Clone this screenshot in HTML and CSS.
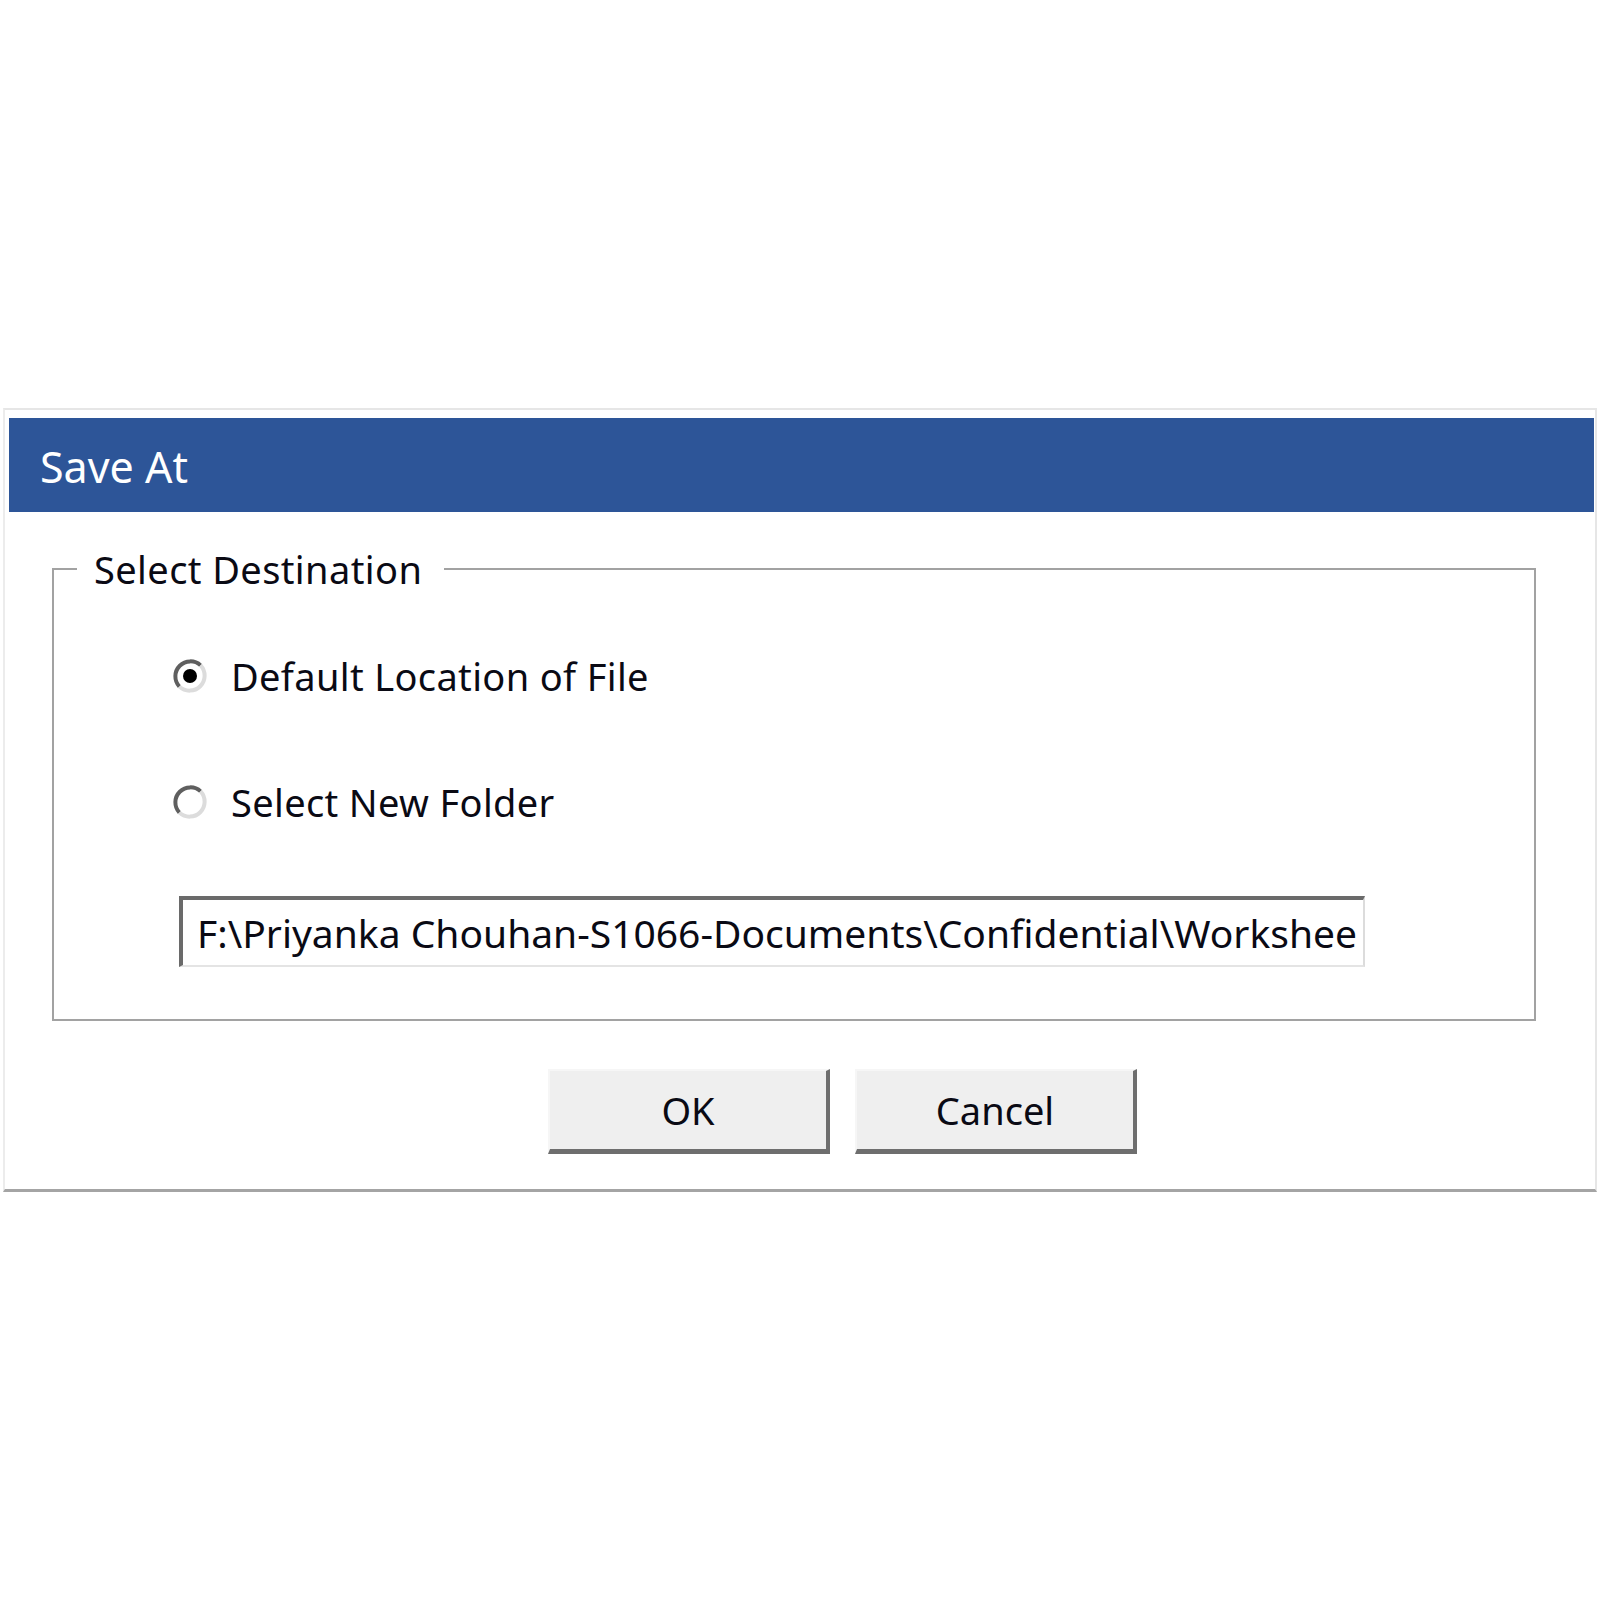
FILE: index.html
```html
<!DOCTYPE html>
<html lang="en">
<head>
<meta charset="utf-8">
<title>Save At</title>
<link rel="stylesheet" href="styles.css">
</head>
<body>
<div class="page">
  <div class="window">
    <div class="titlebar"><span class="title">Save At</span></div>
    <fieldset class="group">
      <legend class="legend">Select Destination</legend>
      <div class="group-body">
        <div class="radio-row row-first">
          <svg class="radio" viewBox="0 0 40 40" width="40" height="40" aria-hidden="true">
            <circle cx="20" cy="20" r="15" fill="#ffffff"/>
            <path d="M9.4 30.6 A15 15 0 0 1 30.6 9.4" fill="none" stroke="#5f5f5f" stroke-width="4"/>
            <path d="M30.6 9.4 A15 15 0 0 1 9.4 30.6" fill="none" stroke="#dcdcdc" stroke-width="4"/>
            <circle cx="20" cy="20" r="7" fill="#000000"/>
          </svg>
          <span class="label">Default Location of File</span>
        </div>
        <div class="radio-row row-second">
          <svg class="radio" viewBox="0 0 40 40" width="40" height="40" aria-hidden="true">
            <circle cx="20" cy="20" r="15" fill="#ffffff"/>
            <path d="M9.4 30.6 A15 15 0 0 1 30.6 9.4" fill="none" stroke="#5f5f5f" stroke-width="4"/>
            <path d="M30.6 9.4 A15 15 0 0 1 9.4 30.6" fill="none" stroke="#dcdcdc" stroke-width="4"/>
          </svg>
          <span class="label">Select New Folder</span>
        </div>
        <div class="path-box"><span class="path-text">F:\Priyanka Chouhan-S1066-Documents\Confidential\Workshee</span></div>
      </div>
    </fieldset>
    <div class="buttons">
      <div class="btn">OK</div>
      <div class="btn">Cancel</div>
    </div>
  </div>
</div>
</body>
</html>
```

FILE: styles.css
```css
html, body {
  margin: 0;
  padding: 0;
  background: #ffffff;
}

body {
  font-family: "Noto Sans", "DejaVu Sans", sans-serif;
  color: #0a0a14;
}

.page {
  width: 1600px;
  height: 1600px;
  padding: 408px 3px 0 3px;
  box-sizing: border-box;
}

.window {
  box-sizing: border-box;
  width: 1594px;
  border-top: 2px solid #e6e6e6;
  border-left: 2px solid #ececec;
  border-right: 2px solid #e6e6e6;
  border-bottom: 3px solid #a4a4a4;
  padding: 8px 1px 35px 4px;
  background: #ffffff;
}

.titlebar {
  height: 94px;
  background: #2d5598;
  display: flex;
  align-items: center;
  padding-left: 31px;
  box-sizing: border-box;
}

.title {
  color: #ffffff;
  font-size: 43px;
  line-height: 1;
  margin-top: 2px;
}

.group {
  margin: 35px 58px 0 43px;
  border: 2px solid #a2a2a2;
  padding: 0;
  min-width: 0;
}

.legend {
  font-size: 38px;
  line-height: 44px;
  letter-spacing: 0.4px;
  margin-left: 23px;
  padding: 0 22px 0 17px;
}

.group-body {
  display: flex;
  flex-direction: column;
  padding: 60px 0 52px 0;
}

.radio-row {
  display: flex;
  align-items: center;
  height: 50px;
  padding-left: 116px;
}

.row-second {
  margin-top: 76px;
}

.radio {
  flex: none;
  width: 40px;
  height: 40px;
}

.label {
  font-size: 38px;
  line-height: 50px;
  letter-spacing: 0.35px;
  margin-left: 21px;
}

.path-box {
  margin-top: 69px;
  margin-left: 125px;
  width: 1186px;
  height: 71px;
  box-sizing: border-box;
  border-top: 4px solid #6a6a6a;
  border-left: 4px solid #6a6a6a;
  border-right: 2px solid #dcdcdc;
  border-bottom: 2px solid #e4e4e4;
  padding-left: 14px;
  display: flex;
  align-items: center;
  white-space: nowrap;
}

.path-text {
  font-size: 39px;
  line-height: 1;
}

.buttons {
  display: flex;
  gap: 25px;
  margin-top: 48px;
  margin-left: 539px;
}

.btn {
  box-sizing: border-box;
  width: 282px;
  height: 85px;
  background: #efefef;
  border-top: 2px solid #f6f6f6;
  border-left: 2px solid #f6f6f6;
  border-right: 4px solid #6e6e6e;
  border-bottom: 5px solid #6e6e6e;
  display: flex;
  align-items: center;
  justify-content: center;
  font-size: 38px;
  line-height: 1;
}
```
